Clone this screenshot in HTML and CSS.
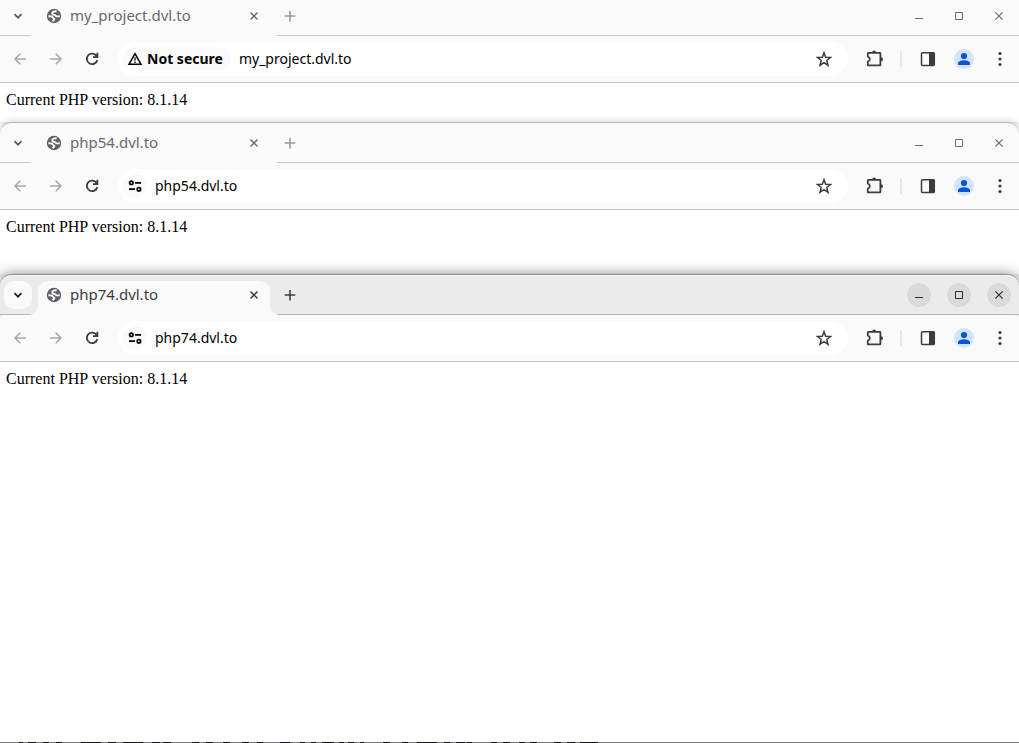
FILE: index.html
```
<!DOCTYPE html>
<html lang="en">
<head>
  <meta charset="UTF-8">
  <meta name="viewport" content="width=device-width, initial-scale=1">
  <title>PHP versions</title>
  <link rel="stylesheet" href="styles.css">
</head>
<body>
  <!-- Shared icons -->
  <svg class="sprite" aria-hidden="true">
    <symbol id="i-chevron" viewBox="0 0 16 16"><path d="M4.500 6.200 8 9.700l3.500-3.500" fill="none" stroke="currentColor" stroke-width="1.700"/></symbol>
    <symbol id="i-globe" viewBox="0 0 16 16">
      <circle cx="8" cy="8" r="7.200" fill="#5f6368"/>
      <path d="M10.600 3.300C8 3 5.900 4 6.300 5.700c.4 1.600 2.900.8 3.500 2.100.2.500 1.900.7 3.900.5M2.300 8.300c2.300-.2 4.300.3 4.900 1.500.4.900 1.600.8 1 1.700-.3.600-1 .9-1.500 1.700" fill="none" stroke="#fafafa" stroke-width="1.900"/>
    </symbol>
    <symbol id="i-close" viewBox="0 0 16 16"><path d="m4.500 4.500 7 7m0-7-7 7" fill="none" stroke="currentColor" stroke-width="1.500"/></symbol>
    <symbol id="i-plus" viewBox="0 0 16 16"><path d="M8 3v10.500M2.700 8h10.600" fill="none" stroke="currentColor" stroke-width="1.600"/></symbol>
    <symbol id="i-min" viewBox="0 0 16 16"><path d="M4 10.500h8" stroke="currentColor"/></symbol>
    <symbol id="i-max" viewBox="0 0 16 16"><path d="M4.500 4.500h7v7h-7z" fill="none" stroke="currentColor"/></symbol>
    <symbol id="i-exit" viewBox="0 0 16 16"><path d="m4.300 4.300 7.400 7.400m0-7.400-7.400 7.400" fill="none" stroke="currentColor" stroke-width="1.200"/></symbol>
    <symbol id="i-back" viewBox="0 0 16 16"><path d="M14 8H3M8.300 2.700 3 8l5.300 5.300" fill="none" stroke="currentColor" stroke-width="1.600"/></symbol>
    <symbol id="i-forward" viewBox="0 0 16 16"><path d="M2 8h11M7.700 2.700 13 8l-5.300 5.300" fill="none" stroke="currentColor" stroke-width="1.600"/></symbol>
    <symbol id="i-reload" viewBox="0 0 16 16"><path d="M12.700 5.200A5.300 5.300 0 1 0 13.300 9M13.400 1.800v4.400H9" fill="none" stroke="currentColor" stroke-width="1.800"/></symbol>
    <symbol id="i-warning" viewBox="0 0 16 16"><path d="M8 2.700 14 13.300H2z" fill="none" stroke="currentColor" stroke-width="1.500"/><path d="M8 6.300v3.400M8 10.500v1.500" stroke="currentColor" stroke-width="1.200"/></symbol>
    <symbol id="i-tune" viewBox="0 0 16 16"><g fill="none" stroke="currentColor" stroke-width="1.700"><circle cx="4.300" cy="4.800" r="1.700"/><path d="M8 4.800h6M2 11.200h6"/><circle cx="11.900" cy="11.200" r="1.700"/></g></symbol>
    <symbol id="i-star" viewBox="0 0 16 16"><path d="m8 1.800 1.700 4.400 4.800.3-3.700 3 1.200 4.700L8 11.600l-4 2.600 1.200-4.700-3.700-3 4.800-.3z" fill="none" stroke="currentColor" stroke-width="1.500"/></symbol>
    <symbol id="i-puzzle" viewBox="0 0 18 18"><path d="M2.300 2.900h11.600a.5.5 0 0 1 .5.500v11.500a.5.5 0 0 1-.5.500H2.300a.5.5 0 0 1-.5-.5v-3.200c2.700-.7 2.700-4.400 0-5.100V3.400a.5.500 0 0 1 .5-.5z" fill="none" stroke="currentColor" stroke-width="1.800" stroke-linejoin="round"/><path d="M6.200 2.500a1.900 1.900 0 0 1 3.800 0zM15 7.200a2 2 0 0 1 0 4z" fill="currentColor"/></symbol>
    <symbol id="i-panel" viewBox="0 0 16 16"><rect x="1.500" y="1.700" width="12.800" height="12.800" rx="1" fill="none" stroke="currentColor" stroke-width="1.500"/><path d="M9 1.500h5.500v13H9z" fill="currentColor"/></symbol>
    <symbol id="i-person" viewBox="0 0 20 20"><circle cx="10" cy="10" r="10" fill="#d3e3fd"/><circle cx="10" cy="7" r="3.100" fill="#0b57d0"/><path d="M4 16v-1.700c0-2 3.500-3 6-3s6 1 6 3V16z" fill="#0b57d0"/></symbol>
    <symbol id="i-dots" viewBox="0 0 16 16"><g fill="currentColor"><circle cx="8" cy="2.500" r="1.600"/><circle cx="8" cy="8" r="1.600"/><circle cx="8" cy="13.500" r="1.600"/></g></symbol>
  </svg>

  <section class="window first">
    <div class="tabstrip">
      <button class="tab-search" aria-label="Search tabs"><svg class="icon"><use href="#i-chevron"/></svg></button>
      <div class="tab">
        <svg class="icon"><use href="#i-globe"/></svg>
        <span class="tab-title">my_project.dvl.to</span>
        <button class="tab-close" aria-label="Close tab"><svg class="icon"><use href="#i-close"/></svg></button>
      </div>
      <button class="new-tab" aria-label="New tab"><svg class="icon"><use href="#i-plus"/></svg></button>
      <div class="controls">
        <button aria-label="Minimize"><svg class="icon"><use href="#i-min"/></svg></button>
        <button aria-label="Maximize"><svg class="icon"><use href="#i-max"/></svg></button>
        <button aria-label="Close"><svg class="icon"><use href="#i-exit"/></svg></button>
      </div>
    </div>
    <div class="toolbar">
      <button class="tool off" aria-label="Back"><svg class="icon"><use href="#i-back"/></svg></button>
      <button class="tool off" aria-label="Forward"><svg class="icon"><use href="#i-forward"/></svg></button>
      <button class="tool" aria-label="Reload"><svg class="icon"><use href="#i-reload"/></svg></button>
      <div class="omnibox">
        <button class="chip warning"><svg class="icon"><use href="#i-warning"/></svg><span>Not secure</span></button>
        <input type="text" value="my_project.dvl.to" aria-label="Address">
        <button class="star" aria-label="Bookmark"><svg class="icon"><use href="#i-star"/></svg></button>
      </div>
      <button class="tool" aria-label="Extensions"><svg class="icon puzzle"><use href="#i-puzzle"/></svg></button>
      <span class="divider"></span>
      <button class="tool" aria-label="Side panel"><svg class="icon"><use href="#i-panel"/></svg></button>
      <button class="tool" aria-label="Profile"><svg class="icon avatar"><use href="#i-person"/></svg></button>
      <button class="tool" aria-label="Menu"><svg class="icon"><use href="#i-dots"/></svg></button>
    </div>
    <div class="page">Current PHP version: 8.1.14</div>
  </section>

  <section class="window second">
    <div class="tabstrip">
      <button class="tab-search" aria-label="Search tabs"><svg class="icon"><use href="#i-chevron"/></svg></button>
      <div class="tab">
        <svg class="icon"><use href="#i-globe"/></svg>
        <span class="tab-title">php54.dvl.to</span>
        <button class="tab-close" aria-label="Close tab"><svg class="icon"><use href="#i-close"/></svg></button>
      </div>
      <button class="new-tab" aria-label="New tab"><svg class="icon"><use href="#i-plus"/></svg></button>
      <div class="controls">
        <button aria-label="Minimize"><svg class="icon"><use href="#i-min"/></svg></button>
        <button aria-label="Maximize"><svg class="icon"><use href="#i-max"/></svg></button>
        <button aria-label="Close"><svg class="icon"><use href="#i-exit"/></svg></button>
      </div>
    </div>
    <div class="toolbar">
      <button class="tool off" aria-label="Back"><svg class="icon"><use href="#i-back"/></svg></button>
      <button class="tool off" aria-label="Forward"><svg class="icon"><use href="#i-forward"/></svg></button>
      <button class="tool" aria-label="Reload"><svg class="icon"><use href="#i-reload"/></svg></button>
      <div class="omnibox">
        <button class="chip" aria-label="Site information"><svg class="icon"><use href="#i-tune"/></svg></button>
        <input type="text" value="php54.dvl.to" aria-label="Address">
        <button class="star" aria-label="Bookmark"><svg class="icon"><use href="#i-star"/></svg></button>
      </div>
      <button class="tool" aria-label="Extensions"><svg class="icon puzzle"><use href="#i-puzzle"/></svg></button>
      <span class="divider"></span>
      <button class="tool" aria-label="Side panel"><svg class="icon"><use href="#i-panel"/></svg></button>
      <button class="tool" aria-label="Profile"><svg class="icon avatar"><use href="#i-person"/></svg></button>
      <button class="tool" aria-label="Menu"><svg class="icon"><use href="#i-dots"/></svg></button>
    </div>
    <div class="page">Current PHP version: 8.1.14</div>
  </section>

  <section class="window active">
    <div class="tabstrip">
      <button class="tab-search" aria-label="Search tabs"><svg class="icon"><use href="#i-chevron"/></svg></button>
      <div class="tab">
        <svg class="icon"><use href="#i-globe"/></svg>
        <span class="tab-title">php74.dvl.to</span>
        <button class="tab-close" aria-label="Close tab"><svg class="icon"><use href="#i-close"/></svg></button>
      </div>
      <button class="new-tab" aria-label="New tab"><svg class="icon"><use href="#i-plus"/></svg></button>
      <div class="controls">
        <button aria-label="Minimize"><svg class="icon"><use href="#i-min"/></svg></button>
        <button aria-label="Maximize"><svg class="icon"><use href="#i-max"/></svg></button>
        <button aria-label="Close"><svg class="icon"><use href="#i-exit"/></svg></button>
      </div>
    </div>
    <div class="toolbar">
      <button class="tool off" aria-label="Back"><svg class="icon"><use href="#i-back"/></svg></button>
      <button class="tool off" aria-label="Forward"><svg class="icon"><use href="#i-forward"/></svg></button>
      <button class="tool" aria-label="Reload"><svg class="icon"><use href="#i-reload"/></svg></button>
      <div class="omnibox">
        <button class="chip" aria-label="Site information"><svg class="icon"><use href="#i-tune"/></svg></button>
        <input type="text" value="php74.dvl.to" aria-label="Address">
        <button class="star" aria-label="Bookmark"><svg class="icon"><use href="#i-star"/></svg></button>
      </div>
      <button class="tool" aria-label="Extensions"><svg class="icon puzzle"><use href="#i-puzzle"/></svg></button>
      <span class="divider"></span>
      <button class="tool" aria-label="Side panel"><svg class="icon"><use href="#i-panel"/></svg></button>
      <button class="tool" aria-label="Profile"><svg class="icon avatar"><use href="#i-person"/></svg></button>
      <button class="tool" aria-label="Menu"><svg class="icon"><use href="#i-dots"/></svg></button>
    </div>
    <div class="page">Current PHP version: 8.1.14</div>
  </section>

  <!-- Sliver of the window behind -->
  <svg class="behind" height="1" aria-hidden="true">
    <path d="M19 .5h4m5 0h8m7 0h6m7 0h6m19 0h20m7 0h8m7 0h20m9 0h8m3 0h8m21 0h7m7 0h7m10 0h7m12 0h7m8 0h6m17 0h10m10 0h5m6 0h5m6 0h12m5 0h5m4 0h6m6 0h4m19 0h7m12 0h6m9 0h20m7 0h6m6 0h9m2 0h5m19 0h6m6 0h7m9 0h6m5 0h7m17 0h7m6 0h8m5 0h18" stroke="#15151c"/>
  </svg>
</body>
</html>
```

FILE: styles.css
```
/* Global */
*, *::before, *::after { box-sizing: border-box; }
body {
  display: flex;
  flex-direction: column;
  min-height: 100vh;
  margin: 0;
  background: #fff;
  font-family: "Noto Sans", sans-serif;
}
button {
  display: flex;
  align-items: center;
  justify-content: center;
  flex: none;
  margin: 0;
  padding: 0;
  border: none;
  background: none;
  color: inherit;
  font: inherit;
}
.sprite { position: absolute; width: 0; height: 0; }
.icon { display: block; flex: none; width: 16px; height: 16px; }

/* Windows */
.window {
  border-top: 1px solid #b8b8b8;
  border-radius: 12px 12px 0 0;
  background: #fafafa;
  color: #3c3c3c;
  box-shadow: 0 0 8px rgba(0,0,0,0.2);
}
.first { border-top: none; border-radius: 0; }
.active {
  display: flex;
  flex-direction: column;
  flex: 1;
  border-top-color: #8c8c8c;
  background: #ebebeb;
  box-shadow: 0 0 14px rgba(0,0,0,0.45);
}

/* Tab strip */
.tabstrip {
  display: flex;
  align-items: flex-start;
  height: 40px;
  padding: 6px 8px 0 4px;
  border-bottom: 1px solid #c6c6c6;
  color: #6b6b6b;
}
.first .tabstrip { height: 36px; padding-top: 2px; }
.active .tabstrip {
  border-radius: 12px 12px 0 0;
  box-shadow: inset 0 1px #f8f8f8;
  border-bottom-color: #b8b8b8;
  color: #3c3c3c;
}
.tab-search { width: 28px; height: 28px; border-radius: 10px; color: #5a5a5a; }
.active .tab-search { background: #fafafa; color: #1f1f1f; }
.tab {
  position: relative;
  display: flex;
  gap: 8px;
  flex: 0 1 232px;
  height: 34px;
  margin: 0 6px;
  padding: 6px 8px 0;
  border-radius: 10px 10px 0 0;
  background: #fafafa;
}
.tab::before, .tab::after {
  content: "";
  position: absolute;
  bottom: 0;
  width: 8px;
  height: 8px;
}
.tab::before { right: 100%; background: radial-gradient(circle at 0 0, transparent 7px, #fafafa 8px); }
.tab::after { left: 100%; background: radial-gradient(circle at 100% 0, transparent 7px, #fafafa 8px); }
.tab-title { flex: 1; font-size: 15px; line-height: 14px; white-space: nowrap; }
.tab-close { width: 16px; height: 16px; }
.new-tab { width: 28px; height: 28px; color: #999; }
.active .new-tab { color: #3c3c3c; }
.controls { display: flex; gap: 16px; margin: 2px 0 0 auto; }
.controls button { width: 24px; height: 24px; border-radius: 50%; }
.active .controls button { background: #dadada; color: #2e2e2e; }

/* Toolbar */
.toolbar {
  display: flex;
  align-items: center;
  height: 47px;
  padding: 0 1px 0 2px;
  border-bottom: 1px solid #c6c6c6;
  background: #fafafa;
}
.active .toolbar { border-radius: 4px 4px 0 0; }
.tool { width: 36px; height: 34px; }
.off { color: #a8a8a8; }
.omnibox {
  display: flex;
  align-items: center;
  flex: 1;
  height: 34px;
  margin: 0 9px 0 8px;
  padding: 0 12px 0 5px;
  border-radius: 17px;
  background: #fff;
}
.chip {
  width: 24px;
  height: 24px;
  border-radius: 12px;
  background: #fafafa;
  color: #000;
}
.chip.warning {
  gap: 4px;
  width: auto;
  padding: 0 8px 0 4px;
  font-size: 14px;
  font-weight: bold;
}
.chip span { padding-bottom: 2px; }
.omnibox input {
  flex: 1;
  min-width: 0;
  height: 24px;
  padding: 0 8px 2px;
  border: none;
  outline: none;
  background: none;
  color: #000;
  font: 14px "Noto Sans", sans-serif;
}
.star { width: 24px; height: 24px; }
.puzzle { width: 18px; height: 18px; }
.avatar { width: 20px; height: 20px; }
.divider { width: 2px; height: 16px; margin: 0 8px 0 7px; background: #e8e8e8; }

/* Page content */
.page {
  padding: 8px 6px;
  background: #fff;
  color: #000;
  font: 16px/18px "Liberation Serif", serif;
}
.first .page { height: 39px; }
.second .page { height: 64px; }
.active .page { flex: 1; }

.behind { position: relative; display: block; width: 100%; background: #77777b; }
```
